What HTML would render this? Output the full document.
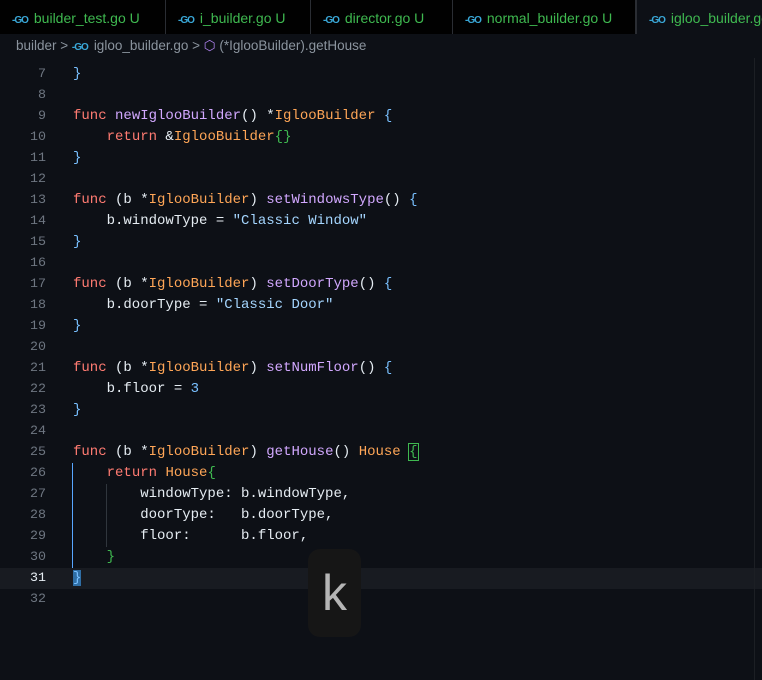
<!DOCTYPE html><html><head><style>
body{margin:0;width:762px;height:680px;background:#0d1016;overflow:hidden;font-family:"Liberation Sans",sans-serif;position:relative}
.tabs{position:absolute;top:0;left:0;width:762px;height:34px;background:#010101;border-bottom:1px solid #2a2d33}
.tab{position:absolute;top:0;height:34px;border-right:1px solid #2a2d33;color:#3fb950;font-size:14px;line-height:36px;padding-left:12px;box-sizing:border-box;white-space:nowrap;overflow:hidden}
.go{color:#3aa8d8;font-size:10px;font-weight:bold;margin-right:6px;letter-spacing:-1px}
.tab.act{background:#0d1016;border-bottom:none;height:35px;border-left:1px solid #2a2d33}
.bc{position:absolute;top:34px;left:0;width:762px;height:24px;background:#0d1016;color:#8b949e;font-size:13.5px;line-height:24px;padding-left:16px;box-sizing:border-box}
.code{position:absolute;top:43px;left:0;font-family:"Liberation Mono",monospace;font-size:14px}
.ln{position:absolute;left:0;width:46px;text-align:right;color:#6e7681;height:21px;line-height:21px;font-size:13.33px}
.l{position:absolute;left:73px;height:21px;line-height:21px;color:#e6edf3;white-space:pre}
.k{color:#ff7b72}.t{color:#ffa657}.f{color:#d2a8ff}.s{color:#a5d6ff}.n{color:#79c0ff}.b{color:#79c0ff}.g{color:#3fb950}
</style></head><body>
<div class="tabs">
<div class="tab" style="left:0;width:166px"><span class="go">-GO</span>builder_test.go U</div>
<div class="tab" style="left:166px;width:145px"><span class="go">-GO</span>i_builder.go U</div>
<div class="tab" style="left:311px;width:142px"><span class="go">-GO</span>director.go U</div>
<div class="tab" style="left:453px;width:183px"><span class="go">-GO</span>normal_builder.go U</div>
<div class="tab act" style="left:636px;width:130px"><span class="go">-GO</span>igloo_builder.go</div>
</div>
<div style="position:absolute;top:568px;left:0;width:762px;height:21px;background:#181b21"></div>
<div style="position:absolute;top:463px;left:72px;width:1px;height:105px;background:#58a6ff"></div>
<div style="position:absolute;top:484px;left:106px;width:1px;height:63px;background:#30363d"></div>
<div class="bc">builder &gt; <span class="go">-GO</span>igloo_builder.go &gt; <span style="color:#b083f0">⬡</span> (*IglooBuilder).getHouse</div>
<div class="code">
<div class="ln" style="top:21px">7</div><div class="l" style="top:21px"><span class="b">}</span></div>
<div class="ln" style="top:42px">8</div>
<div class="ln" style="top:63px">9</div><div class="l" style="top:63px"><span class="k">func</span> <span class="f">newIglooBuilder</span>() *<span class="t">IglooBuilder</span> <span class="b">{</span></div>
<div class="ln" style="top:84px">10</div><div class="l" style="top:84px">    <span class="k">return</span> &amp;<span class="t">IglooBuilder</span><span class="g">{}</span></div>
<div class="ln" style="top:105px">11</div><div class="l" style="top:105px"><span class="b">}</span></div>
<div class="ln" style="top:126px">12</div>
<div class="ln" style="top:147px">13</div><div class="l" style="top:147px"><span class="k">func</span> (b *<span class="t">IglooBuilder</span>) <span class="f">setWindowsType</span>() <span class="b">{</span></div>
<div class="ln" style="top:168px">14</div><div class="l" style="top:168px">    b.windowType = <span class="s">"Classic Window"</span></div>
<div class="ln" style="top:189px">15</div><div class="l" style="top:189px"><span class="b">}</span></div>
<div class="ln" style="top:210px">16</div>
<div class="ln" style="top:231px">17</div><div class="l" style="top:231px"><span class="k">func</span> (b *<span class="t">IglooBuilder</span>) <span class="f">setDoorType</span>() <span class="b">{</span></div>
<div class="ln" style="top:252px">18</div><div class="l" style="top:252px">    b.doorType = <span class="s">"Classic Door"</span></div>
<div class="ln" style="top:273px">19</div><div class="l" style="top:273px"><span class="b">}</span></div>
<div class="ln" style="top:294px">20</div>
<div class="ln" style="top:315px">21</div><div class="l" style="top:315px"><span class="k">func</span> (b *<span class="t">IglooBuilder</span>) <span class="f">setNumFloor</span>() <span class="b">{</span></div>
<div class="ln" style="top:336px">22</div><div class="l" style="top:336px">    b.floor = <span class="n">3</span></div>
<div class="ln" style="top:357px">23</div><div class="l" style="top:357px"><span class="b">}</span></div>
<div class="ln" style="top:378px">24</div>
<div class="ln" style="top:399px">25</div><div class="l" style="top:399px"><span class="k">func</span> (b *<span class="t">IglooBuilder</span>) <span class="f">getHouse</span>() <span class="t">House</span> <span class="g" style="outline:1px solid #3fb950">{</span></div>
<div class="ln" style="top:420px">26</div><div class="l" style="top:420px">    <span class="k">return</span> <span class="t">House</span><span class="g">{</span></div>
<div class="ln" style="top:441px">27</div><div class="l" style="top:441px">        windowType: b.windowType,</div>
<div class="ln" style="top:462px">28</div><div class="l" style="top:462px">        doorType:   b.doorType,</div>
<div class="ln" style="top:483px">29</div><div class="l" style="top:483px">        floor:      b.floor,</div>
<div class="ln" style="top:504px">30</div><div class="l" style="top:504px">    <span class="g">}</span></div>
<div class="ln" style="top:525px;color:#e6edf3">31</div><div class="l" style="top:525px"><span style="background:#2f6ea5;color:#79c0ff">}</span></div>
<div class="ln" style="top:546px">32</div>
</div>
<div style="position:absolute;left:308px;top:549px;width:53px;height:88px;background:#161616;border-radius:12px;color:#b5b5b5;font-size:50px;line-height:88px;text-align:center">k</div>
<div style="position:absolute;left:754px;top:58px;width:1px;height:622px;background:#1c1f24"></div>
</body></html>
